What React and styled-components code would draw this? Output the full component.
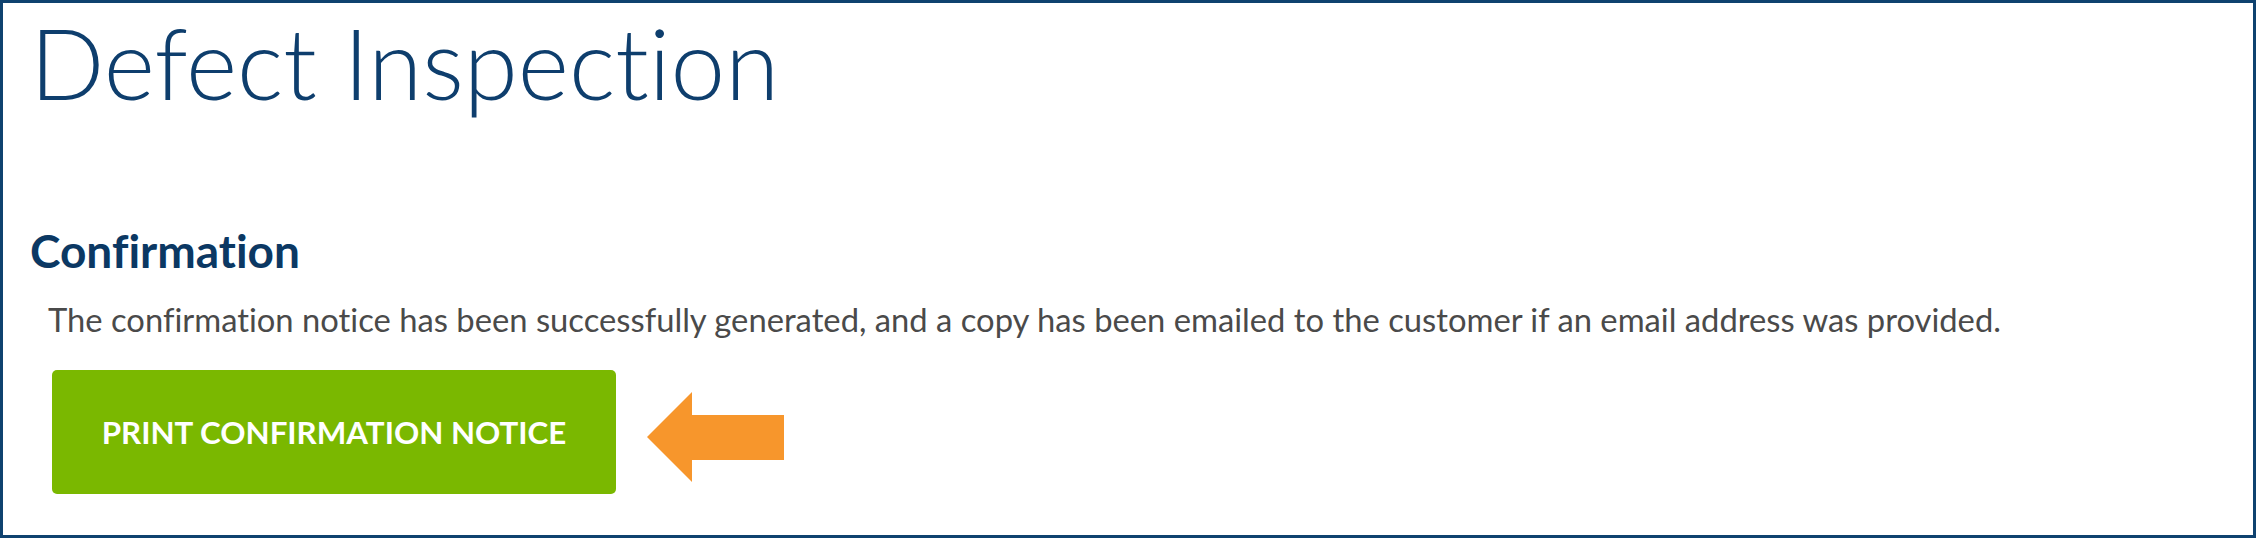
import React from "react";
import styled, { createGlobalStyle } from "styled-components";

const GlobalStyle = createGlobalStyle`
    html, body {
        margin: 0;
        padding: 0;
        background: #fff;
    }
    body {
        font-family: Lato, "Open Sans", sans-serif;
        font-variant-ligatures: none;
    }
`;

const Frame = styled.div`
    /* 바깥 테두리 박스 */
    box-sizing: border-box;
    width: 2256px;
    height: 538px;
    border: 3px solid #0f426f;
    padding: 10px 0 0 27px;
    display: flex;
    flex-direction: column;
`;

const Title = styled.h1`
    margin: 0;
    font-family: Lato, sans-serif;
    font-weight: 300;
    font-size: 98px;
    line-height: 1;
    color: #0e3e6d;
`;

const Section = styled.section`
    margin-top: 112px;
    display: flex;
    flex-direction: column;
`;

const Heading = styled.h2`
    margin: 0;
    font-family: Lato, sans-serif;
    font-weight: 700;
    font-size: 46px;
    line-height: 1.2;
    color: #0b3863;
`;

const Message = styled.p`
    margin: 22px 0 0 18px;
    font-family: Lato, sans-serif;
    font-weight: 400;
    font-size: 32.75px;
    line-height: 1.2;
    color: #4a4a4a;
`;

const ActionRow = styled.div`
    margin: 31px 0 0 22px;
    display: flex;
    align-items: flex-start;
    gap: 31px;
`;

const PrintButton = styled.button`
    width: 564px;
    height: 124px;
    border: none;
    border-radius: 5px;
    background-color: #7ab800;
    color: #fff;
    font-family: Lato, sans-serif;
    font-weight: 700;
    font-size: 31.3px;
    text-transform: uppercase;
    cursor: pointer;
`;

const Pointer = styled.svg`
    margin-top: 22px;
    flex-shrink: 0;
`;

function ArrowLeft() {
    return (
        <Pointer width="137" height="90" viewBox="0 0 137 90">
            <polygon points="0,45 45,0 45,23 137,23 137,68 45,68 45,90" fill="#f7962c" />
        </Pointer>
    );
}

export default function App() {
    return (
        <>
            <GlobalStyle />
            <Frame>
                <Title>Defect Inspection</Title>
                <Section>
                    <Heading>Confirmation</Heading>
                    <Message>
                        The confirmation notice has been successfully generated, and a copy has been emailed to the
                        customer if an email address was provided.
                    </Message>
                    <ActionRow>
                        <PrintButton type="button">Print Confirmation Notice</PrintButton>
                        <ArrowLeft />
                    </ActionRow>
                </Section>
            </Frame>
        </>
    );
}
